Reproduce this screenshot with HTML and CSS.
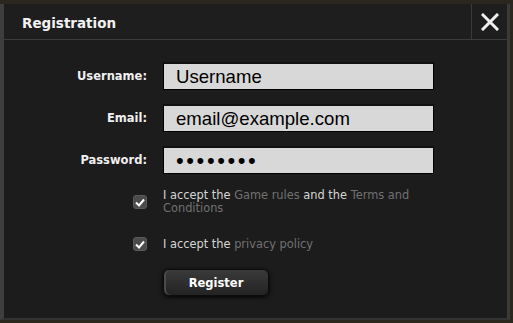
FILE: index.html
```html
<!DOCTYPE html>
<html lang="en">
<head>
    <meta charset="UTF-8">
    <meta name="viewport" content="width=device-width, initial-scale=1.0">
    <title>Registration</title>
    <link rel="stylesheet" href="styles.css">
</head>
<body>
    <div class="window">
        <div class="header">
            <div class="title">Registration</div>
            <div class="close">
                <svg width="18" height="18" viewBox="0 0 18 18">
                    <path d="M2 2 L16 16 M16 2 L2 16" stroke="#f0f0f0" stroke-width="3" stroke-linecap="square"/>
                </svg>
            </div>
        </div>
        <form class="form" id="registerForm">
            <label class="label" for="username">Username:</label>
            <input class="field" type="text" id="username" value="Username">

            <label class="label" for="email">Email:</label>
            <input class="field" type="email" id="email" value="email@example.com">

            <label class="label" for="password">Password:</label>
            <input class="field password" type="password" id="password" value="password">

            <span class="check first">
                <svg width="10" height="9" viewBox="0 0 10 9"><path d="M1 4.5 L4 7.5 L9 1.5" fill="none" stroke="#fff" stroke-width="2"/></svg>
            </span>
            <div class="terms first">I accept the <a href="#">Game rules</a> and the <a href="#">Terms and</a><br><a href="#">Conditions</a></div>

            <span class="check second">
                <svg width="10" height="9" viewBox="0 0 10 9"><path d="M1 4.5 L4 7.5 L9 1.5" fill="none" stroke="#fff" stroke-width="2"/></svg>
            </span>
            <div class="terms second">I accept the <a href="#">privacy policy</a></div>

            <div></div>
            <div><button type="submit" class="btn">Register</button></div>
        </form>
    </div>
</body>
</html>
```

FILE: styles.css
```css
body {
    margin: 0;
    background: #2b261e;
    font-family: "DejaVu Sans", Verdana, sans-serif;
}
.window {
    margin-top: 4px;
    width: 503px;
    height: 314px;
    background: #1c1c1c;
    border-left: 4px solid #3e3e3e;
    border-right: 3px solid #3a3a3a;
    border-bottom: 2px solid #333;
}
.header {
    display: flex;
    height: 35px;
    background: #1e1e1e;
    border-bottom: 1px solid #3c3c3c;
}
.title {
    flex: 1;
    padding: 3px 0 0 18px;
    line-height: 32px;
    font-size: 13.5px;
    font-weight: bold;
    color: #f2f2f2;
}
.close {
    width: 35px;
    border-left: 1px solid #3a3a3a;
    display: flex;
    align-items: center;
    justify-content: center;
}
.form {
    display: grid;
    grid-template-columns: 143px 271px;
    column-gap: 16px;
    row-gap: 14px;
    align-items: center;
    padding-top: 22px;
}
.label {
    justify-self: end;
    font-size: 11.5px;
    font-weight: bold;
    color: #f0f0f0;
}
.field {
    box-sizing: border-box;
    width: 271px;
    height: 28px;
    margin: 0;
    padding: 0 12px;
    background: #d8d8d8;
    border: 1px solid #000;
    border-top: 2px solid #111;
    font-family: "Liberation Sans", Arial, sans-serif;
    font-size: 18.6px;
    color: #000;
    outline: none;
}
.password {
    font-size: 22px;
    letter-spacing: 2.6px;
}
.check {
    justify-self: end;
    display: flex;
    align-items: center;
    justify-content: center;
    width: 14px;
    height: 14px;
    box-sizing: border-box;
    border-radius: 3px;
    background: #4b4b4b;
    border: 1px solid #5a5a5a;
}
.terms {
    font-size: 11.4px;
    line-height: 13px;
    color: #d6d6d6;
}
.terms a {
    color: #717171;
    text-decoration: none;
}
.first {
    margin-top: 1px;
}
.second {
    margin-top: 8px;
}
.btn {
    margin-top: 4px;
    width: 106px;
    height: 27px;
    border: 1px solid #0c0c0c;
    border-radius: 6px;
    background: linear-gradient(#3a3a3a, #232323);
    box-shadow: 0 1px 4px #000, inset 2px 0 0 #4a4a4a;
    font-family: "DejaVu Sans", Verdana, sans-serif;
    font-size: 11.5px;
    font-weight: bold;
    color: #fff;
    cursor: pointer;
}
```
